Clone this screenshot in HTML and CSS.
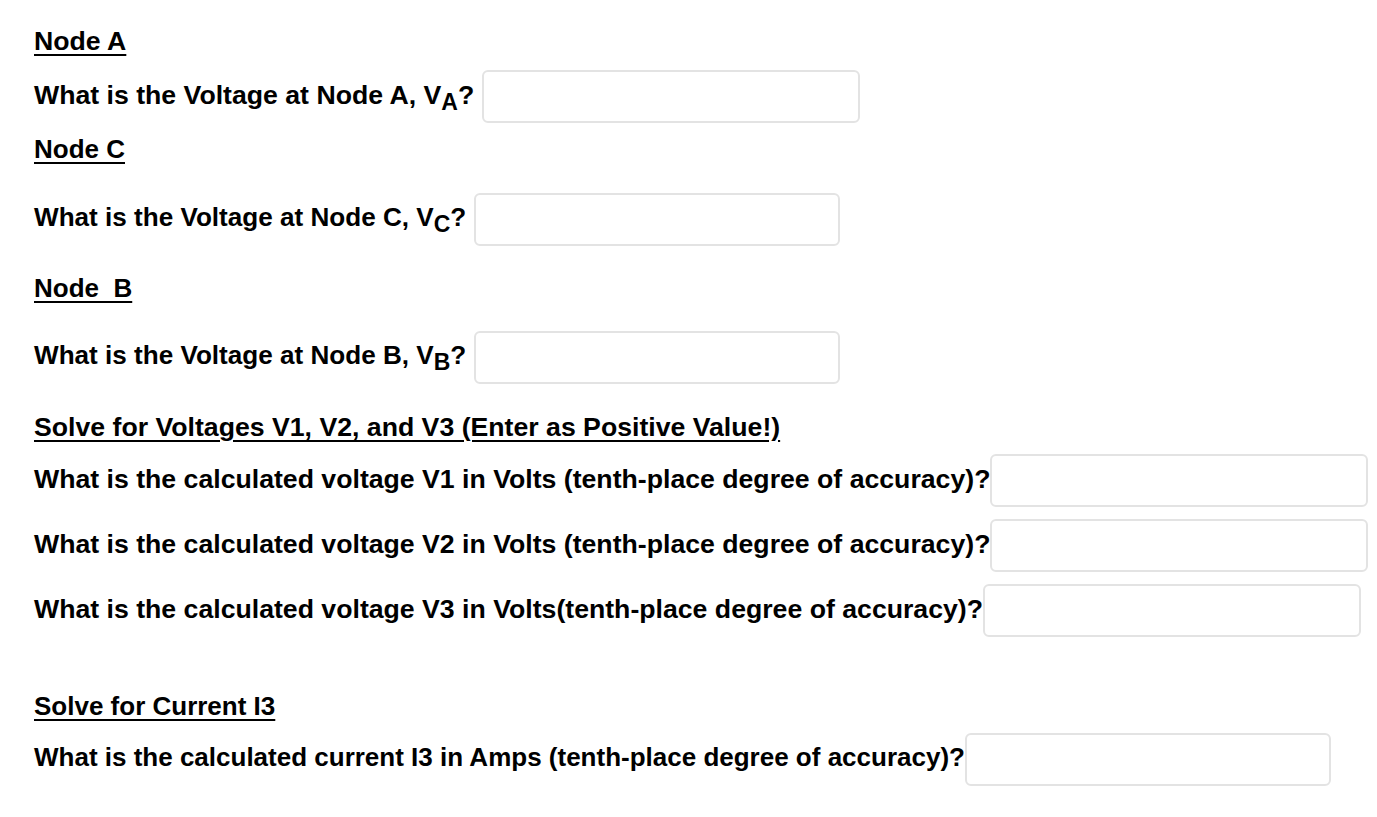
FILE: index.html
```html
<!DOCTYPE html>
<html lang="en">
<head>
<meta charset="utf-8">
<title>Node Voltages</title>
<link rel="stylesheet" href="styles.css">
</head>
<body>
<div class="page">
  <p class="heading heading-first">Node A</p>
  <p class="question question-a">What is the Voltage at Node A, V<sub>A</sub>? <input class="answer answer-wide" type="text"></p>

  <p class="heading heading-small heading-c">Node C</p>
  <p class="question question-small question-c">What is the Voltage at Node C, V<sub>C</sub>? <input class="answer answer-narrow" type="text"></p>

  <p class="heading heading-small heading-b">Node&nbsp; B</p>
  <p class="question question-small question-b">What is the Voltage at Node B, V<sub>B</sub>? <input class="answer answer-narrow" type="text"></p>

  <p class="heading heading-v">Solve for Voltages V1, V2, and V3 (Enter as Positive Value!)</p>
  <p class="question question-v1">What is the calculated voltage V1 in Volts (tenth-place degree of accuracy)?<input class="answer answer-wide" type="text"></p>
  <p class="question question-v">What is the calculated voltage V2 in Volts (tenth-place degree of accuracy)?<input class="answer answer-wide" type="text"></p>
  <p class="question question-v">What is the calculated voltage V3 in Volts(tenth-place degree of accuracy)?<input class="answer answer-wide" type="text"></p>

  <p class="heading heading-small heading-i">Solve for Current I3</p>
  <p class="question question-i">What is the calculated current I3 in Amps (tenth-place degree of accuracy)?<input class="answer answer-narrow" type="text"></p>
</div>
</body>
</html>
```

FILE: styles.css
```css
html, body {
  margin: 0;
  padding: 0;
  background: #ffffff;
}

.page {
  padding: 26px 0 0 34px;
  font-family: "Liberation Sans", Arial, sans-serif;
  font-size: 26.67px;
  font-weight: bold;
  color: #000000;
}

.heading {
  margin: 0;
  line-height: 31px;
  text-decoration: underline;
  text-decoration-thickness: 2px;
  text-underline-offset: 4px;
  white-space: nowrap;
}

.heading-small {
  font-size: 26px;
}

.question {
  margin: 0;
  height: 53px;
  line-height: 31px;
  white-space: nowrap;
}

.question-small {
  font-size: 26.1px;
}

.question sub {
  font-size: 23px;
  vertical-align: -6px;
  line-height: 0;
}

.answer {
  box-sizing: border-box;
  height: 53px;
  margin: 0;
  padding: 0 12px;
  border: 2px solid #e3e3e3;
  border-radius: 6px;
  background: #ffffff;
  vertical-align: middle;
  font: inherit;
  font-weight: normal;
  outline: none;
}

.answer-wide { width: 378px; }
.answer-narrow { width: 366px; }

.heading-first { margin-top: 0; }
.question-a { margin-top: 13px; }
.heading-c { margin-top: 11px; }
.question-c { margin-top: 28px; }
.heading-b { margin-top: 27px; }
.question-b { margin-top: 27px; }
.heading-v { margin-top: 28px; }
.question-v1 { margin-top: 11px; }
.question-v { margin-top: 12px; }
.heading-i { margin-top: 54px; }
.question-i { margin-top: 11px; font-size: 26px; }
```
